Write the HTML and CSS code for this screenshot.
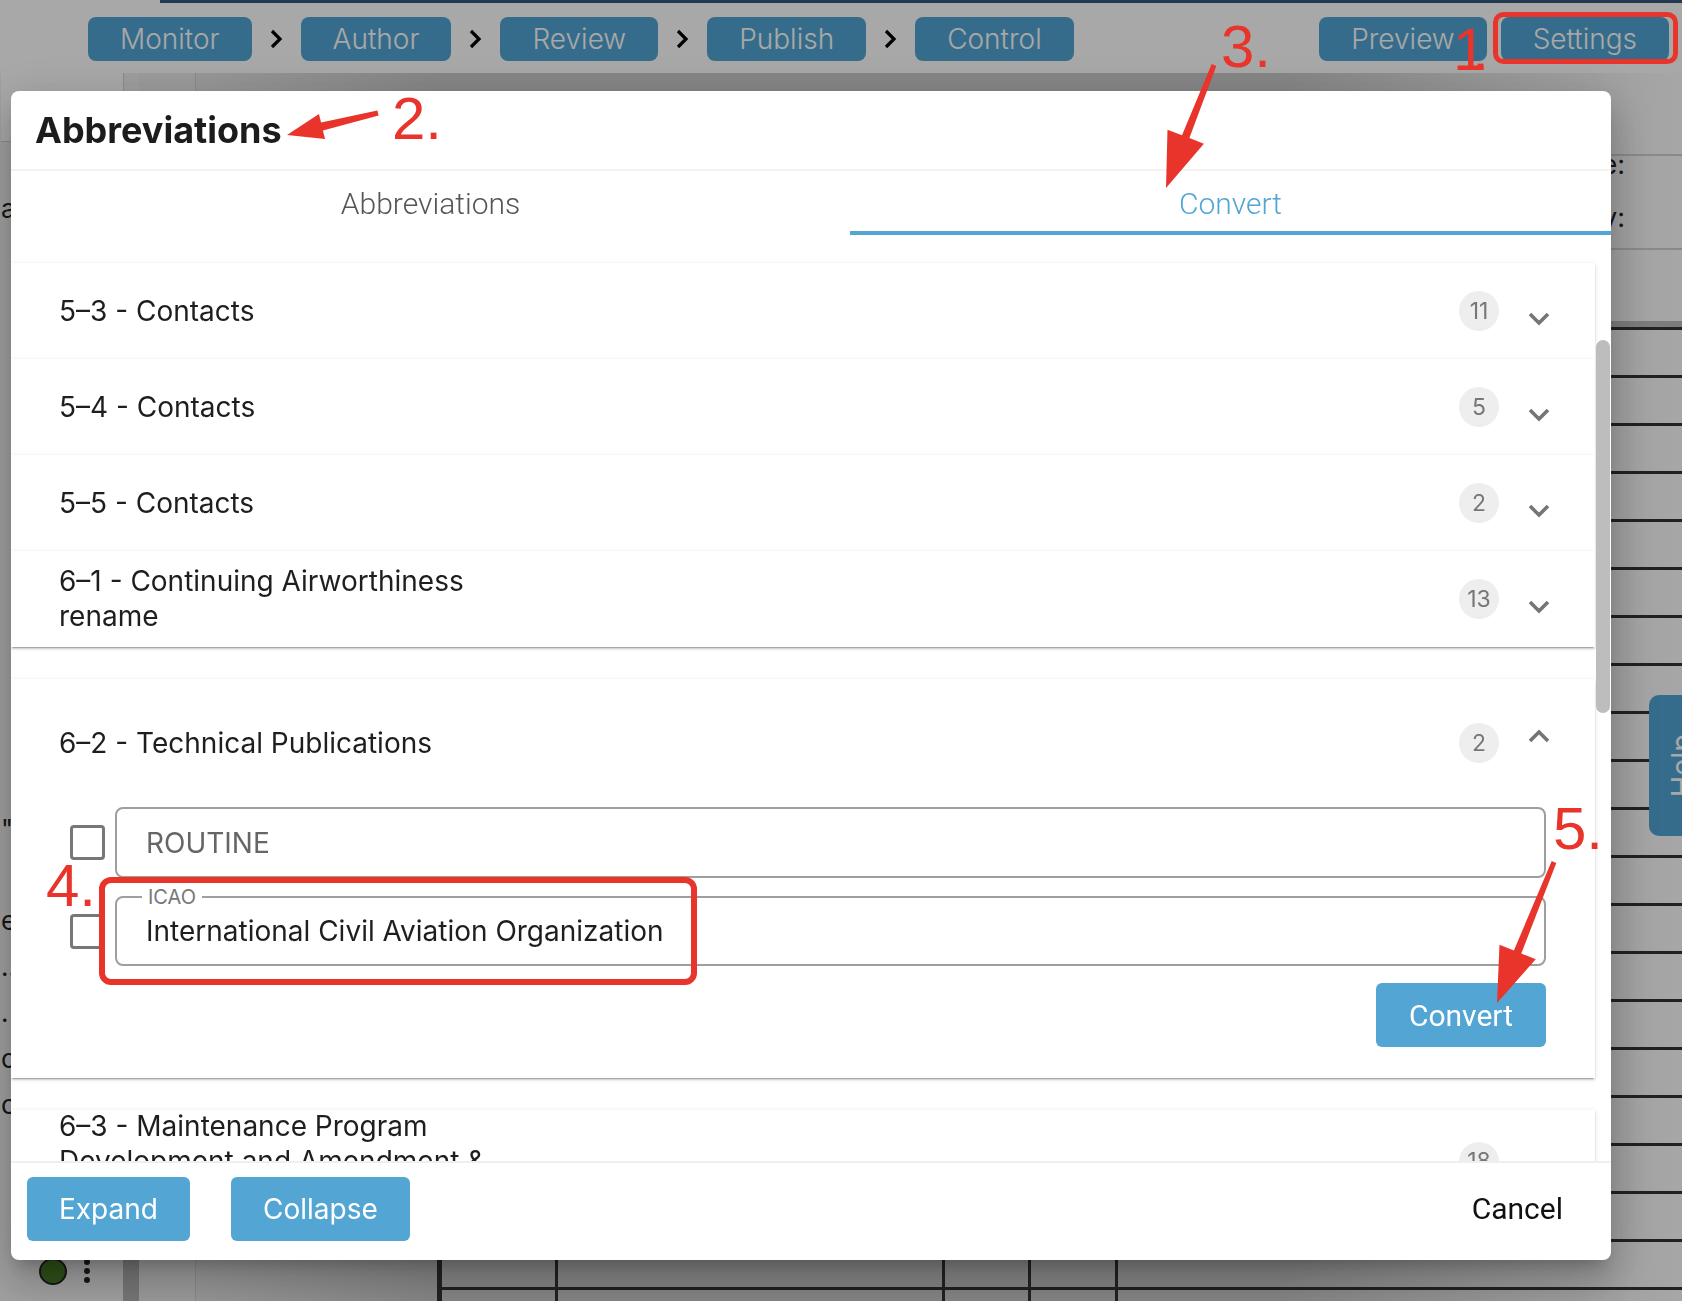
FILE: index.html
```html
<!DOCTYPE html>
<html lang="en">
<head>
    <meta charset="UTF-8">
    <meta name="viewport" content="width=device-width, initial-scale=1.0">
    <title>Abbreviations</title>
    <link rel="stylesheet" href="styles.css">
</head>
<body>
    <div class="app">
        <header class="topbar">
            <nav class="workflow">
                <button class="step">Monitor</button>
                <svg class="step-arrow" viewBox="0 0 13 20"><path d="M2 2l8 8-8 8"/></svg>
                <button class="step">Author</button>
                <svg class="step-arrow" viewBox="0 0 13 20"><path d="M2 2l8 8-8 8"/></svg>
                <button class="step">Review</button>
                <svg class="step-arrow" viewBox="0 0 13 20"><path d="M2 2l8 8-8 8"/></svg>
                <button class="step">Publish</button>
                <svg class="step-arrow" viewBox="0 0 13 20"><path d="M2 2l8 8-8 8"/></svg>
                <button class="step">Control</button>
            </nav>
            <div class="top-actions">
                <button class="step">Preview</button>
                <button class="step">Settings</button>
            </div>
        </header>

        <div class="workspace">
            <aside class="sidebar">
                <div class="side-head"></div>
                <div class="side-first">amendments</div>
                <ul class="side-list">
                    <li>"Routine"</li>
                    <li></li>
                    <li>elements</li>
                    <li>...</li>
                    <li>. .</li>
                    <li>other</li>
                    <li>c.</li>
                </ul>
                <div class="side-foot">
                    <span class="status-dot"></span>
                    <svg class="kebab" viewBox="0 0 8 26"><circle cx="4" cy="4" r="3"/><circle cx="4" cy="13" r="3"/><circle cx="4" cy="22" r="3"/></svg>
                </div>
            </aside>
            <div class="splitter"><span class="splitter-handle"></span></div>
            <div class="tree"></div>
            <div class="gutter"></div>
            <section class="sheet">
                <div class="sheet-meta">
                    <div class="meta-row"></div>
                    <div class="meta-row meta-fields">
                        <span>Phase:</span>
                        <span>Category:</span>
                    </div>
                </div>
                <div class="sheet-head"></div>
                <div class="sheet-grid">
                    <div class="col col-a"></div>
                    <div class="col col-b"></div>
                    <div class="col col-c"></div>
                    <div class="col col-d"></div>
                    <div class="col col-e"></div>
                    <div class="col col-f"></div>
                </div>
            </section>
        </div>

        <div class="help-tab"><span>Help</span></div>
    </div>

    <div class="backdrop"></div>

    <div class="dialog">
        <h2 class="dialog-title">Abbreviations</h2>
        <div class="tabs">
            <button class="tab">Abbreviations</button>
            <button class="tab active">Convert</button>
        </div>

        <div class="panel-body">
            <div class="panels">
                <div class="panel">
                    <div class="panel-head">
                        <span class="panel-title"><span>5–3 - Contacts</span></span>
                        <span class="count">11</span>
                        <svg class="chevron" viewBox="0 0 24 16"><path d="M3 3l9 9 9-9"/></svg>
                    </div>
                </div>
                <div class="panel">
                    <div class="panel-head">
                        <span class="panel-title"><span>5–4 - Contacts</span></span>
                        <span class="count">5</span>
                        <svg class="chevron" viewBox="0 0 24 16"><path d="M3 3l9 9 9-9"/></svg>
                    </div>
                </div>
                <div class="panel">
                    <div class="panel-head">
                        <span class="panel-title"><span>5–5 - Contacts</span></span>
                        <span class="count">2</span>
                        <svg class="chevron" viewBox="0 0 24 16"><path d="M3 3l9 9 9-9"/></svg>
                    </div>
                </div>
                <div class="panel">
                    <div class="panel-head">
                        <span class="panel-title"><span>6–1 - Continuing Airworthiness rename</span></span>
                        <span class="count">13</span>
                        <svg class="chevron" viewBox="0 0 24 16"><path d="M3 3l9 9 9-9"/></svg>
                    </div>
                </div>
                <div class="panel open">
                    <div class="panel-head">
                        <span class="panel-title"><span>6–2 - Technical Publications</span></span>
                        <span class="count">2</span>
                        <svg class="chevron" viewBox="0 0 24 16"><path d="M3 3l9 9 9-9"/></svg>
                    </div>
                    <div class="panel-content">
                        <div class="abbr-row">
                            <span class="check"></span>
                            <div class="field">
                                <input class="field-input muted" value="ROUTINE" readonly>
                            </div>
                        </div>
                        <div class="abbr-row">
                            <span class="check"></span>
                            <div class="field field-tall">
                                <span class="field-label">ICAO</span>
                                <input class="field-input" value="International Civil Aviation Organization" readonly>
                            </div>
                        </div>
                        <div class="convert-row">
                            <button class="btn btn-convert">Convert</button>
                        </div>
                    </div>
                </div>
                <div class="panel panel-tall">
                    <div class="panel-head">
                        <span class="panel-title"><span>6–3 - Maintenance Program Development and Amendment &amp; Approval</span></span>
                        <span class="count">18</span>
                        <svg class="chevron" viewBox="0 0 24 16"><path d="M3 3l9 9 9-9"/></svg>
                    </div>
                </div>
            </div>
            <div class="scroll-thumb"></div>
        </div>

        <div class="dialog-actions">
            <button class="btn">Expand</button>
            <button class="btn">Collapse</button>
            <button class="btn-text">Cancel</button>
        </div>
    </div>

    <!-- review markup drawn over the screen -->
    <svg class="markup" width="1682" height="1301" viewBox="0 0 1682 1301">
        <rect class="box" x="1495.5" y="14.5" width="180" height="47" rx="8"/>
        <rect class="box box-wide" x="102" y="880" width="592" height="102" rx="9"/>
        <polygon points="377.4,110.6 321.1,122.6 318.9,113.9 287,135 325.1,139.1 322.9,130.4 378.6,115.4"/>
        <polygon points="1211.7,64.1 1182,135.3 1167.5,129.7 1166,188 1203.9,143.7 1189.4,138.1 1216.3,65.9"/>
        <polygon points="1551.7,861.1 1513.9,950.5 1499.5,944.7 1497,1003 1535.7,959.3 1521.3,953.5 1556.3,862.9"/>
    </svg>
    <span class="note note-1">1.</span>
    <span class="note note-2">2.</span>
    <span class="note note-3">3.</span>
    <span class="note note-4">4.</span>
    <span class="note note-5">5.</span>
</body>
</html>
```

FILE: styles.css
```css
* {
    box-sizing: border-box;
}
html, body {
    margin: 0;
    height: 100%;
}
body {
    font-family: Inter, "Open Sans", sans-serif;
    color: #222;
    background: #fff;
    overflow: hidden;
}
button {
    font: inherit;
    border: none;
    cursor: pointer;
}

/* page behind the dialog */
.app {
    height: 1301px;
    display: flex;
    flex-direction: column;
}
.topbar {
    flex: none;
    height: 73px;
    display: flex;
    justify-content: space-between;
    padding: 17px 13px 0 88px;
    background: linear-gradient(#2f597c, #2f597c) 160px 0 / 100% 3px no-repeat, #fff;
    box-shadow: 0 2px 4px rgba(0, 0, 0, 0.35);
}
.workflow, .top-actions {
    display: flex;
    align-items: center;
    gap: 18px;
    height: 44px;
}
.top-actions {
    gap: 14px;
}
.step {
    height: 44px;
    padding: 0 32px;
    border-radius: 8px;
    background: #53a5d3;
    color: #fff;
    font-size: 28px;
    font-weight: 300;
    line-height: 44px;
}
.step-arrow {
    width: 13px;
    height: 20px;
    fill: none;
    stroke: #000;
    stroke-width: 3.2;
}

.workspace {
    flex: 1;
    display: flex;
    min-height: 0;
}
.sidebar {
    width: 123px;
    display: flex;
    flex-direction: column;
    background: #f3f3f3;
    font-size: 26px;
    padding-left: 1px;
    overflow: hidden;
    white-space: nowrap;
}
.side-head {
    height: 69px;
    background: #fff;
    border-bottom: 1px solid #d4d4d4;
}
.side-first {
    margin-top: 50px;
    line-height: 34px;
}
.side-list {
    list-style: none;
    margin: 580px 0 0;
    padding: 0;
}
.side-list li {
    height: 46px;
    line-height: 46px;
}
.side-foot {
    margin-top: auto;
    margin-bottom: 5px;
    height: 50px;
    display: flex;
    align-items: center;
    gap: 16px;
    padding-left: 38px;
}
.status-dot {
    width: 28px;
    height: 27px;
    border-radius: 50%;
    background: #467b25;
    border: 2px solid #222;
}
.kebab {
    width: 8px;
    height: 26px;
    fill: #222;
}
.splitter {
    width: 16px;
    display: flex;
    flex-direction: column;
    justify-content: flex-end;
    background: #f0f0f0;
    border-left: 1px solid #d2d2d2;
}
.splitter-handle {
    height: 90px;
    margin-left: -1px;
    background: #b4b4b4;
}
.tree {
    width: 57px;
    background: #ebebeb;
    border-right: 1px solid #d2d2d2;
}
.gutter {
    width: 241px;
    background: linear-gradient(to right, #e6e6e6, #cbcbcb);
}
.sheet {
    flex: 1;
    display: flex;
    flex-direction: column;
    background: linear-gradient(to right, #cbcbcb 68%, #fdfdfd);
}
.sheet-meta {
    height: 177px;
    display: flex;
    flex-direction: column;
}
.meta-row {
    height: 83px;
    border-bottom: 2px solid #d0d0d0;
}
.meta-fields {
    height: 94px;
    display: flex;
    flex-direction: column;
    align-items: flex-end;
    justify-content: center;
    padding: 0 57px 22px 0;
    font-size: 27px;
    line-height: 53px;
}
.sheet-head {
    height: 77px;
    border-bottom: 6px solid #bdbdbd;
}
.sheet-grid {
    flex: 1;
    display: flex;
    background: linear-gradient(#333 0 3px, transparent 3px) 0 0 / 100% 48px repeat-y;
}
.col {
    border-left: 3px solid #333;
}
.col-a { width: 118px; border-left-width: 5px; }
.col-b { width: 387px; }
.col-c { width: 86px; }
.col-d { width: 87px; }
.col-e { width: 84px; }
.col-f { flex: 1; border-left: none; }

.help-tab {
    position: fixed;
    left: 1649px;
    top: 695px;
    width: 60px;
    height: 141px;
    display: flex;
    align-items: center;
    padding-left: 18px;
    border-radius: 10px 0 0 10px;
    background: #53a5d3;
    color: #fff;
    font-size: 29px;
}
.help-tab span {
    writing-mode: vertical-rl;
    transform: rotate(180deg);
    line-height: 1;
}

.backdrop {
    position: fixed;
    inset: 0;
    z-index: 10;
    background: rgba(0, 0, 0, 0.34);
}

/* dialog */
.dialog {
    position: fixed;
    z-index: 20;
    left: 11px;
    top: 91px;
    width: 1600px;
    height: 1169px;
    display: flex;
    flex-direction: column;
    background: #fff;
    border-radius: 8px;
    overflow: hidden;
    box-shadow: 0 11px 15px -7px rgba(0, 0, 0, 0.2), 0 24px 38px 3px rgba(0, 0, 0, 0.14), 0 9px 46px 8px rgba(0, 0, 0, 0.12);
}
.dialog-title {
    flex: none;
    height: 80px;
    margin: 0;
    padding: 0 24px;
    display: flex;
    align-items: center;
    font-size: 36px;
    font-weight: 700;
    color: #1c1c1c;
    border-bottom: 2px solid #f2f2f2;
}
.tabs {
    flex: none;
    display: grid;
    grid-template-columns: 839px 1fr;
    height: 64px;
}
.tab {
    display: flex;
    align-items: center;
    justify-content: center;
    padding-top: 5px;
    background: none;
    border-bottom: 4px solid transparent;
    font-family: Roboto, sans-serif;
    font-size: 30px;
    font-weight: 300;
    color: #555;
}
.tab.active {
    color: #53a5d3;
    border-bottom-color: #53a5d3;
}

.panel-body {
    flex: 1;
    position: relative;
    overflow: hidden;
}
.panels {
    padding: 28px 16px 0 0;
}
.scroll-thumb {
    position: absolute;
    right: 1px;
    top: 105px;
    width: 14px;
    height: 373px;
    border-radius: 7px;
    background: #bdbdbd;
}
.panel {
    position: relative;
    background: #fff;
    box-shadow: 0 3px 1px -2px rgba(0, 0, 0, 0.2), 0 2px 2px 0 rgba(0, 0, 0, 0.14), 0 1px 5px 0 rgba(0, 0, 0, 0.12);
}
.panel.open {
    margin: 32px 0;
}
.panel-head {
    height: 96px;
    display: flex;
    align-items: center;
    padding: 0 44px 0 48px;
    font-size: 28px;
    line-height: 35px;
    color: #1e1e1e;
}
.panel.open .panel-head {
    height: 128px;
}
.panel-tall .panel-head {
    height: 103px;
}
.panel-title {
    flex: 1;
}
.panel-title span {
    display: inline-block;
    max-width: 455px;
}
.count {
    flex: none;
    width: 40px;
    height: 40px;
    margin-right: 28px;
    display: flex;
    align-items: center;
    justify-content: center;
    border-radius: 50%;
    background: #eee;
    color: #777;
    font-size: 23px;
}
.chevron {
    flex: none;
    width: 24px;
    height: 16px;
    fill: none;
    stroke: #757575;
    stroke-width: 3.6;
    transform: translateY(8px);
}
.panel.open .chevron {
    transform: translateY(-7px) rotate(180deg);
}

.panel-content {
    display: flex;
    flex-direction: column;
    gap: 18px;
    padding: 0 49px 31px 59px;
}
.abbr-row {
    display: flex;
    align-items: center;
    gap: 10px;
}
.check {
    flex: none;
    width: 35px;
    height: 35px;
    border: 3px solid #777;
    border-radius: 4px;
}
.field {
    position: relative;
    flex: 1;
    height: 71px;
    display: flex;
    align-items: center;
    border: 2px solid #9e9e9e;
    border-radius: 8px;
}
.field-tall {
    height: 70px;
}
.field-input {
    width: 100%;
    height: 100%;
    padding: 0 0 0 29px;
    border: none;
    outline: none;
    background: none;
    font: inherit;
    font-size: 28px;
    color: #1e1e1e;
}
.field-input.muted {
    color: #666;
}
.field-label {
    position: absolute;
    left: 25px;
    top: -13px;
    padding: 0 6px;
    background: #fff;
    font-size: 20px;
    line-height: 24px;
    color: #777;
}
.convert-row {
    display: flex;
    justify-content: flex-end;
    margin-top: -1px;
}
.btn {
    height: 64px;
    padding: 0 32px;
    border-radius: 6px;
    background: #53a5d3;
    color: #fff;
    font-size: 28px;
}
.btn-convert {
    width: 170px;
    padding: 0;
    font-family: Roboto, sans-serif;
    font-size: 30px;
}

.dialog-actions {
    flex: none;
    height: 99px;
    display: flex;
    align-items: center;
    gap: 41px;
    padding: 0 34px 6px 16px;
    border-top: 2px solid #efefef;
}
.btn-text {
    margin-left: auto;
    padding: 0 14px;
    background: none;
    font-family: Roboto, sans-serif;
    font-size: 30px;
    color: #111;
}

/* review markup */
.markup {
    position: fixed;
    z-index: 30;
    left: 0;
    top: 0;
    pointer-events: none;
}
.markup .box {
    fill: none;
    stroke: #e8342a;
    stroke-width: 5;
}
.markup .box-wide {
    stroke-width: 6;
}
.markup polygon {
    fill: #e8342a;
}
.note {
    position: fixed;
    z-index: 30;
    font-family: "Liberation Sans", Arial, sans-serif;
    font-size: 60px;
    line-height: 1;
    color: #e8342a;
}
.note-1 { left: 1453px; top: 20px; letter-spacing: -14px; }
.note-2 { left: 392px; top: 89px; }
.note-3 { left: 1221px; top: 17px; }
.note-4 { left: 46px; top: 856px; }
.note-5 { left: 1553px; top: 799px; }
```
